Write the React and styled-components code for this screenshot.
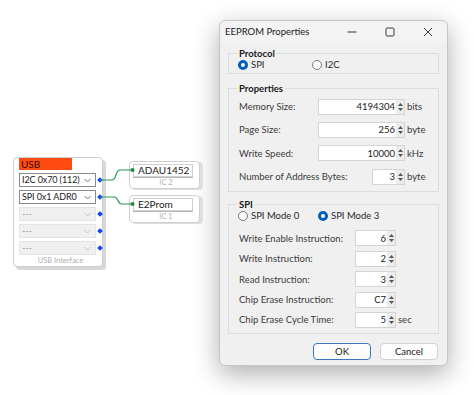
import styled, { createGlobalStyle } from "styled-components";

const GlobalStyle = createGlobalStyle`
  html, body {
    margin: 0;
    padding: 0;
    background: #fff;
  }
  body {
    font-family: Lato, "Noto Sans", sans-serif;
  }
`;

const usbSlots = [
  { key: "i2c", label: "I2C 0x70 (112)", enabled: true },
  { key: "spi", label: "SPI 0x1 ADR0", enabled: true },
  { key: "s3", label: "---", enabled: false },
  { key: "s4", label: "---", enabled: false },
  { key: "s5", label: "---", enabled: false },
];

const icBlocks = [
  { key: "ic2", name: "ADAU1452", caption: "IC 2", top: 161 },
  { key: "ic1", name: "E2Prom", caption: "IC 1", top: 195 },
];

const propertyRows = [
  { label: "Memory Size:", value: "4194304", unit: "bits", width: 87 },
  { label: "Page Size:", value: "256", unit: "byte", width: 87 },
  { label: "Write Speed:", value: "10000", unit: "kHz", width: 87 },
  { label: "Number of Address Bytes:", value: "3", unit: "byte", width: 33 },
];

const spiRows = [
  { label: "Write Enable Instruction:", value: "6" },
  { label: "Write Instruction:", value: "2" },
  { label: "Read Instruction:", value: "3" },
  { label: "Chip Erase Instruction:", value: "C7" },
  { label: "Chip Erase Cycle Time:", value: "5", unit: "sec" },
];

function Chevron({ color = "#555" }) {
  return (
    <svg width="7" height="5" viewBox="0 0 7 5">
      <polyline points="0.5,1 3.5,4 6.5,1" fill="none" stroke={color} strokeWidth="0.9" />
    </svg>
  );
}

function SpinArrows() {
  return (
    <Spin>
      <svg width="7" height="12" viewBox="0 0 7 12">
        <polygon points="3.5,2 6,5 1,5" fill="#555" />
        <polygon points="3.5,10 6,7 1,7" fill="#555" />
      </svg>
    </Spin>
  );
}

function Radio({ checked, label }) {
  return (
    <RadioItem>
      <RadioDot $checked={checked} />
      {label}
    </RadioItem>
  );
}

function NumberBox({ value, width }) {
  return (
    <NumBox $width={width}>
      <NumValue>{value}</NumValue>
      <SpinArrows />
    </NumBox>
  );
}

export default function App() {
  return (
    <>
      <GlobalStyle />
      <Page>
        <Canvas>
          <Wires width="219" height="395" viewBox="0 0 219 395">
            <path
              d="M100 180 H112 C117 180 115 170 120 170 H132"
              fill="none"
              stroke="#2a9a55"
              strokeWidth="1.2"
            />
            <path
              d="M100 197 H114 C119 197 117 204 122 204 H132"
              fill="none"
              stroke="#2a9a55"
              strokeWidth="1.2"
            />
            <circle cx="132.5" cy="170" r="2" fill="#1f8a4a" />
            <circle cx="132.5" cy="204" r="2" fill="#1f8a4a" />
          </Wires>

          <UsbNode>
            <UsbHeader>USB</UsbHeader>
            <SlotList>
              {usbSlots.map(({ key, label, enabled }) => (
                <SlotRow key={key}>
                  <Combo $enabled={enabled}>
                    <ComboText>{label}</ComboText>
                    <Chevron color={enabled ? "#666" : "#bbb"} />
                  </Combo>
                  <Pin />
                </SlotRow>
              ))}
            </SlotList>
            <NodeCaption>USB Interface</NodeCaption>
          </UsbNode>

          {icBlocks.map(({ key, name, caption, top }) => (
            <IcNode key={key} $top={top}>
              <IcName>{name}</IcName>
              <NodeCaption>{caption}</NodeCaption>
            </IcNode>
          ))}
        </Canvas>

        <Dialog>
          <TitleBar>
            <Title>EEPROM Properties</Title>
            <WinButtons>
              <WinButton>
                <svg width="10" height="10" viewBox="0 0 10 10">
                  <line x1="0.5" y1="5" x2="9.5" y2="5" stroke="#222" strokeWidth="0.9" />
                </svg>
              </WinButton>
              <WinButton>
                <svg width="10" height="10" viewBox="0 0 10 10">
                  <rect x="1" y="1" width="8" height="8" rx="1.2" fill="none" stroke="#222" strokeWidth="0.9" />
                </svg>
              </WinButton>
              <WinButton>
                <svg width="10" height="10" viewBox="0 0 10 10">
                  <path d="M1 1 L9 9 M9 1 L1 9" stroke="#222" strokeWidth="0.9" />
                </svg>
              </WinButton>
            </WinButtons>
          </TitleBar>

          <Body>
            <ProtocolGroup>
              <Legend>Protocol</Legend>
              <RadioLine>
                <Radio checked label="SPI" />
                <Radio label="I2C" />
              </RadioLine>
            </ProtocolGroup>

            <Group>
              <Legend>Properties</Legend>
              <PropList>
                {propertyRows.map(({ label, value, unit, width }) => (
                  <PropRow key={label}>
                    <FieldLabel>{label}</FieldLabel>
                    <NumberBox value={value} width={width} />
                    <Unit>{unit}</Unit>
                  </PropRow>
                ))}
              </PropList>
            </Group>

            <Group>
              <Legend>SPI</Legend>
              <RadioLine $spi>
                <Radio label="SPI Mode 0" />
                <Radio checked label="SPI Mode 3" />
              </RadioLine>
              <SpiList>
                {spiRows.map(({ label, value, unit }) => (
                  <SpiRow key={label}>
                    <SpiLabel>{label}</SpiLabel>
                    <NumberBox value={value} width={41} />
                    {unit && <Unit>{unit}</Unit>}
                  </SpiRow>
                ))}
              </SpiList>
            </Group>

            <Footer>
              <Button $primary>OK</Button>
              <Button>Cancel</Button>
            </Footer>
          </Body>
        </Dialog>
      </Page>
    </>
  );
}

// styled-components
const Page = styled.div`
  width: 474px;
  height: 395px;
  display: flex;
  background: #fff;
  overflow: hidden;
`;

const Canvas = styled.div`
  position: relative;
  flex: none;
  width: 219px;
  height: 100%;
`;

const Wires = styled.svg`
  position: absolute;
  left: 0;
  top: 0;
  z-index: 2;
  pointer-events: none;
`;

const UsbNode = styled.div`
  position: absolute;
  left: 13px;
  top: 157px;
  width: 90px;
  height: 110px;
  box-sizing: border-box;
  padding: 0 0 0 5px;
  display: flex;
  flex-direction: column;
  background: #fff;
  border: 1px solid #cdcdcd;
  border-radius: 4px;
  box-shadow: 3px 3px 0 #d8d8d8;
`;

const UsbHeader = styled.div`
  width: 53px;
  height: 12px;
  padding-left: 2px;
  box-sizing: border-box;
  background: #ff4a10;
  color: #3a0c00;
  font-size: 10px;
  line-height: 12px;
`;

const SlotList = styled.div`
  display: flex;
  flex-direction: column;
  gap: 3px;
  margin-top: 3px;
`;

const SlotRow = styled.div`
  display: flex;
  align-items: center;
`;

const Combo = styled.div`
  width: 78px;
  height: 14px;
  box-sizing: border-box;
  display: flex;
  align-items: center;
  justify-content: space-between;
  padding: 0 4px 0 2px;
  background: ${(p) => (p.$enabled ? "#fff" : "#f0f0f0")};
  border: 1px solid ${(p) => (p.$enabled ? "#8a8a8a" : "#e4e4e4")};
  color: ${(p) => (p.$enabled ? "#1a1a1a" : "#9a9a9a")};
`;

const ComboText = styled.span`
  font-size: 9px;
  line-height: 12px;
  letter-spacing: -0.1px;
  white-space: nowrap;
`;

const Pin = styled.div`
  width: 4px;
  height: 4px;
  margin-left: 2px;
  background: #0a46ff;
  transform: rotate(45deg);
`;

const NodeCaption = styled.div`
  align-self: center;
  margin-top: auto;
  margin-bottom: 1px;
  font-size: 7.5px;
  line-height: 8px;
  color: #b0b0b0;
`;

const IcNode = styled.div`
  position: absolute;
  left: 129px;
  top: ${(p) => p.$top}px;
  width: 71px;
  height: 28px;
  box-sizing: border-box;
  padding: 2px 0 0 3px;
  display: flex;
  flex-direction: column;
  background: #fff;
  border: 1px solid #d0d0d0;
  border-radius: 4px;
  box-shadow: 3px 1px 0 #dedede;
`;

const IcName = styled.div`
  width: 60px;
  height: 13px;
  box-sizing: border-box;
  padding-left: 4px;
  border: 1px solid #cfcfcf;
  box-shadow: 0 1px 0 #b8b8b8;
  font-size: 10px;
  line-height: 11px;
  color: #1a1a1a;
`;

const Dialog = styled.div`
  flex: none;
  margin-top: 20px;
  width: 229px;
  height: 346px;
  box-sizing: border-box;
  display: flex;
  flex-direction: column;
  background: #f0f0f0;
  border: 1px solid #c6c6c6;
  border-radius: 6px;
  box-shadow: 0 8px 26px rgba(0, 0, 0, 0.32);
  color: #262626;
`;

const TitleBar = styled.div`
  height: 21px;
  display: flex;
  align-items: center;
  justify-content: space-between;
  padding-left: 5px;
  background: #f3f3f3;
  border-radius: 6px 6px 0 0;
`;

const Title = styled.div`
  font-size: 9.5px;
  color: #1a1a1a;
`;

const WinButtons = styled.div`
  display: flex;
  height: 100%;
`;

const WinButton = styled.div`
  width: 38px;
  height: 100%;
  display: flex;
  align-items: center;
  justify-content: center;
`;

const Body = styled.div`
  flex: 1;
  display: flex;
  flex-direction: column;
  gap: 6px;
  padding: 5px 8px 0 8px;
`;

const Group = styled.fieldset`
  margin: 0;
  padding: 0 7px 3px 8px;
  border: 1px solid #dcdcdc;
  border-radius: 0;
  min-width: 0;
`;

const ProtocolGroup = styled(Group)`
  margin-bottom: 2px;
`;

const Legend = styled.legend`
  padding: 0 2px;
  font-size: 9.5px;
  font-weight: 700;
  line-height: 13px;
  color: #1a1a1a;
`;

const RadioLine = styled.div`
  display: grid;
  grid-template-columns: ${(p) => (p.$spi ? "80px 1fr" : "74px 1fr")};
  height: 11px;
  margin-top: -1px;
  align-items: center;
  padding-left: 1px;
`;

const RadioItem = styled.div`
  display: flex;
  align-items: center;
  gap: 3px;
  font-size: 9.5px;
  color: #262626;
`;

const RadioDot = styled.span`
  width: 10px;
  height: 10px;
  box-sizing: border-box;
  border-radius: 50%;
  background: ${(p) => (p.$checked ? "#fff" : "#fcfcfc")};
  border: ${(p) => (p.$checked ? "3px solid #005fb8" : "1px solid #7a7a7a")};
`;

const PropList = styled.div`
  display: flex;
  flex-direction: column;
`;

const PropRow = styled.div`
  height: 23.3px;
  display: flex;
  align-items: center;
`;

const FieldLabel = styled.div`
  flex: 1;
  padding-left: 2px;
  font-size: 9.5px;
  color: #3a3a3a;
  white-space: nowrap;
`;

const NumBox = styled.div`
  width: ${(p) => p.$width}px;
  height: 16px;
  box-sizing: border-box;
  display: flex;
  align-items: center;
  background: #fff;
  border: 1px solid #d4d4d4;
`;

const NumValue = styled.div`
  flex: 1;
  text-align: right;
  padding-right: 1px;
  font-size: 9.5px;
  color: #1a1a1a;
`;

const Spin = styled.div`
  width: 8px;
  height: 14px;
  display: flex;
  align-items: center;
  justify-content: center;
  background: #ececec;
`;

const Unit = styled.div`
  width: 26px;
  padding-left: 2px;
  box-sizing: border-box;
  font-size: 9.5px;
  color: #3a3a3a;
`;

const SpiList = styled.div`
  display: flex;
  flex-direction: column;
  margin-top: 7px;
`;

const SpiRow = styled.div`
  height: 20.4px;
  display: flex;
  align-items: center;
`;

const SpiLabel = styled.div`
  width: 118px;
  padding-left: 2px;
  box-sizing: border-box;
  font-size: 9.5px;
  color: #3a3a3a;
  white-space: nowrap;
`;

const Footer = styled.div`
  display: flex;
  justify-content: flex-end;
  gap: 9px;
  padding: 3px 1px 0 0;
`;

const Button = styled.div`
  width: 58px;
  height: 17px;
  box-sizing: border-box;
  display: flex;
  align-items: center;
  justify-content: center;
  background: #fdfdfd;
  border: 1px solid ${(p) => (p.$primary ? "#3b78c4" : "#d0d0d0")};
  border-radius: 4px;
  font-size: 9.5px;
  color: #1a1a1a;
`;
